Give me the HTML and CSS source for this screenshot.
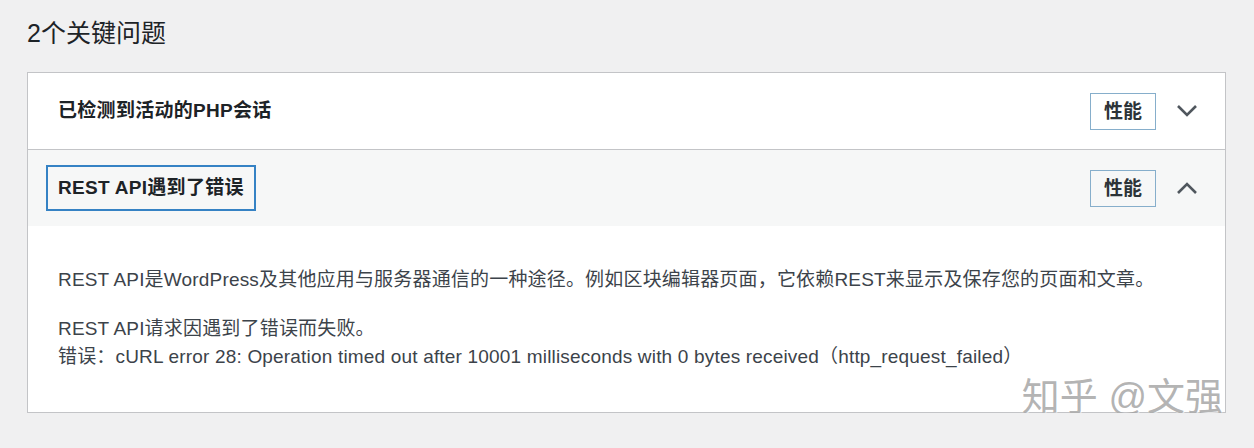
FILE: index.html
```html
<!DOCTYPE html>
<html lang="zh-CN">
<head>
    <meta charset="UTF-8">
    <title>站点健康</title>
    <link rel="stylesheet" href="styles.css">
</head>
<body>

<h2 class="issues-title">2个关键问题</h2>

<div class="accordion">
    <div class="accordion-row">
        <span class="row-title">已检测到活动的PHP会话</span>
        <span class="badge">性能</span>
        <svg class="chevron" width="22" height="14" viewBox="0 0 22 14">
            <path d="M2 2 L11 11 L20 2" fill="none" stroke="#50575e" stroke-width="2.6"/>
        </svg>
    </div>
    <div class="accordion-row open">
        <span class="row-title focused">REST API遇到了错误</span>
        <span class="badge">性能</span>
        <svg class="chevron" width="22" height="14" viewBox="0 0 22 14">
            <path d="M2 12 L11 3 L20 12" fill="none" stroke="#50575e" stroke-width="2.6"/>
        </svg>
    </div>
    <div class="accordion-panel">
        <p>REST API是WordPress及其他应用与服务器通信的一种途径。例如区块编辑器页面，它依赖REST来显示及保存您的页面和文章。</p>
        <p>REST API请求因遇到了错误而失败。<br>错误：cURL error 28: Operation timed out after 10001 milliseconds with 0 bytes received（http_request_failed）</p>
    </div>
    <div class="watermark">知乎 @文强</div>
</div>

</body>
</html>
```

FILE: styles.css
```css
body {
    margin: 0;
    padding: 16px 28px 0 27px;
    background-color: #f0f0f1;
    font-family: "Liberation Sans", "Noto Sans CJK SC", sans-serif;
    color: #1d2327;
}

.issues-title {
    font-size: 25px;
    font-weight: 400;
    line-height: 34px;
    margin: 0 0 22px 0;
}

.accordion {
    position: relative;
    background-color: #fff;
    border: 1px solid #c3c4c7;
}

.accordion-row {
    display: flex;
    align-items: center;
    padding: 15px 27px 15px 18px;
    border-bottom: 1px solid #c3c4c7;
}

.accordion-row.open {
    background-color: #f6f7f7;
    border-bottom: none;
}

.row-title {
    margin-right: auto;
    padding: 10px;
    border: 2px solid transparent;
    font-size: 19px;
    font-weight: 700;
    line-height: 22px;
    letter-spacing: 0.3px;
}

.row-title.focused {
    border-color: #3582c4;
}

.badge {
    padding: 6px 13px;
    border: 1px solid #86aecb;
    font-size: 19px;
    font-weight: 700;
    line-height: 23px;
    color: #2c3338;
}

.chevron {
    margin-left: 20px;
}

.accordion-panel {
    padding: 40px 30px 41px 30px;
    font-size: 19px;
    line-height: 28px;
    letter-spacing: 0.18px;
    color: #3c434a;
}

.accordion-panel p {
    margin: 0 0 21px 0;
}

.accordion-panel p:last-child {
    margin-bottom: 0;
}

.watermark {
    position: absolute;
    right: 2px;
    bottom: -6px;
    font-size: 38px;
    line-height: 42px;
    color: rgba(160, 160, 160, 0.8);
    text-shadow: 1px 1px 0 rgba(255, 255, 255, 0.6);
}
```
